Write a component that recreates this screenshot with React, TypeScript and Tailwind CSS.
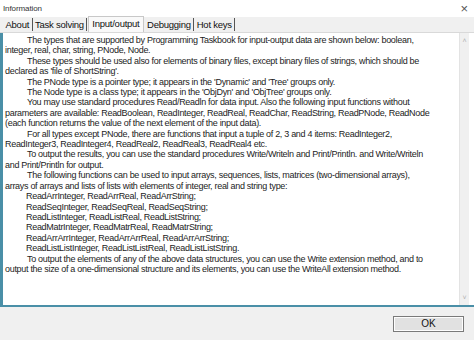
import * as React from "react";

type Line = { text: string; indent?: number };

const LINES: Line[] = [
  { text: "The types that are supported by Programming Taskbook for input-output data are shown below: boolean,", indent: 22 },
  { text: "integer, real, char, string, PNode, Node." },
  { text: "These types should be used also for elements of binary files, except binary files of strings, which should be", indent: 22 },
  { text: "declared as 'file of ShortString'." },
  { text: "The PNode type is a pointer type; it appears in the 'Dynamic' and 'Tree' groups only.", indent: 22 },
  { text: "The Node type is a class type; it appears in the 'ObjDyn' and 'ObjTree' groups only.", indent: 22 },
  { text: "You may use standard procedures Read/Readln for data input. Also the following input functions without", indent: 22 },
  { text: "parameters are available: ReadBoolean, ReadInteger, ReadReal, ReadChar, ReadString, ReadPNode, ReadNode" },
  { text: "(each function returns the value of the next element of the input data)." },
  { text: "For all types except PNode, there are functions that input a tuple of 2, 3 and 4 items: ReadInteger2,", indent: 22 },
  { text: "ReadInteger3, ReadInteger4, ReadReal2, ReadReal3, ReadReal4 etc." },
  { text: "To output the results, you can use the standard procedures Write/Writeln and Print/Println. and Write/Writeln", indent: 22 },
  { text: "and Print/Println for output." },
  { text: "The following functions can be used to input arrays, sequences, lists, matrices (two-dimensional arrays),", indent: 22 },
  { text: "arrays of arrays and lists of lists with elements of integer, real and string type:" },
  { text: "ReadArrInteger, ReadArrReal, ReadArrString;", indent: 21 },
  { text: "ReadSeqInteger, ReadSeqReal, ReadSeqString;", indent: 21 },
  { text: "ReadListInteger, ReadListReal, ReadListString;", indent: 21 },
  { text: "ReadMatrInteger, ReadMatrReal, ReadMatrString;", indent: 21 },
  { text: "ReadArrArrInteger, ReadArrArrReal, ReadArrArrString;", indent: 21 },
  { text: "ReadListListInteger, ReadListListReal, ReadListListString.", indent: 21 },
  { text: "To output the elements of any of the above data structures, you can use the Write extension method, and to", indent: 22 },
  { text: "output the size of a one-dimensional structure and its elements, you can use the WriteAll extension method." },
];

const TABS = ["About", "Task solving", "Input/output", "Debugging", "Hot keys"];

export default function App() {
  const active = "Input/output";
  return (
    <div
      className="w-[474px] h-[343px] bg-white overflow-hidden flex flex-col text-black"
      style={{ fontFamily: '"Liberation Sans", Arial, sans-serif' }}
    >
      {/* title bar */}
      <div className="h-[17px] shrink-0 flex items-center justify-between pl-[3px] pr-[6px] bg-white">
        <span className="text-[8px] tracking-[-0.1px] text-[#333]">Information</span>
        <span className="text-[13px] leading-none text-[#555] font-light">×</span>
      </div>

      {/* tabs */}
      <div className="h-[16px] shrink-0 bg-[#f0f0f0] flex items-end pl-[3px] border-b border-[#d9d9d9] text-[9.5px] tracking-[-0.25px]">
        {TABS.map((t) =>
          t === active ? (
            <div
              key={t}
              className="h-[16px] px-[3px] mx-[1px] bg-[#f9f9f9] border border-b-0 border-[#c8c8c8] leading-[13px] text-[#111]"
            >
              {t}
            </div>
          ) : (
            <div
              key={t}
              className="h-[13px] px-[2.5px] border-r border-[#555] leading-[14px] text-[#111] mb-[1px]"
            >
              {t}
            </div>
          )
        )}
      </div>

      {/* content */}
      <div className="h-[274px] shrink-0 flex border-l-[3px] border-b-[2px] border-[#4a8fa7] bg-white">
        <div className="flex-1 min-w-0 pt-[2px] pl-[2px] text-[9px] tracking-[-0.3px] leading-[10.4px] text-[#1c1c1c] overflow-hidden">
          {LINES.map((l, i) => (
            <div key={i} className="whitespace-nowrap" style={{ paddingLeft: l.indent ?? 0 }}>
              {l.text}
            </div>
          ))}
        </div>
        <div className="w-[10px] mr-[5px] bg-[#f0f0f0] border-l border-[#e3e3e3] flex flex-col justify-between items-center py-[4px] text-[7px] text-[#b0b0b0] leading-none">
          <span>˄</span>
          <span>˅</span>
        </div>
      </div>

      {/* footer */}
      <div className="h-[33px] shrink-0 bg-[#f0f0f0] flex items-start justify-end pr-[10px] pt-[9px]">
        <button className="w-[71px] h-[16px] bg-[#e1e1e1] border border-[#7a7a7a] shadow-[inset_0_0_0_1px_#fdfdfd] text-[10px] leading-none text-[#111]">
          OK
        </button>
      </div>
    </div>
  );
}
